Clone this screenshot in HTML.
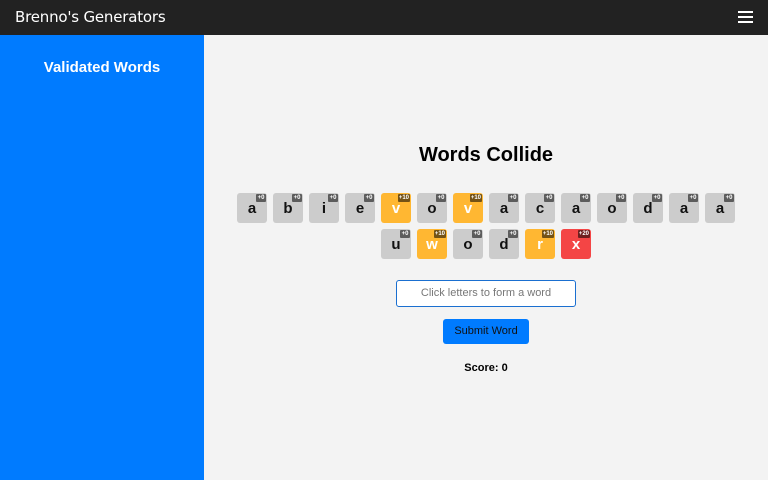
<!DOCTYPE html>
<html><head><meta charset="utf-8"><style>
*{margin:0;padding:0;box-sizing:border-box}
body{width:768px;height:480px;overflow:hidden;background:#f3f3f3;font-family:"Liberation Sans",Arial,Helvetica,sans-serif;position:relative}
.hdr{position:absolute;left:0;top:0;width:768px;height:35px;background:#222}
.hdr .t{position:absolute;left:15px;top:8px;color:#fff;font-family:"DejaVu Sans",sans-serif;font-size:15px;letter-spacing:-0.2px}
.hb{position:absolute;left:738px;width:15px;height:2px;background:#fff}
.side{position:absolute;left:0;top:35px;width:204px;height:445px;background:#007bff}
.side div{position:absolute;top:24px;width:204px;text-align:center;color:#fff;font-weight:bold;font-size:15px;font-family:"Liberation Sans",Arial,sans-serif}
h1{position:absolute;left:204px;width:564px;top:144px;text-align:center;font-size:20px;font-weight:bold;color:#000;font-family:"Liberation Sans",Arial,sans-serif}
.tile{position:absolute;width:30px;height:30px;border-radius:3px;background:#ccc;color:#111;font-weight:bold;font-size:15px;text-align:center;line-height:32px;font-family:"Liberation Sans",Arial,sans-serif}
.tile.y{background:#ffb732;color:#fff}
.tile.r{background:#f44545;color:#fff}
.tile b{position:absolute;top:1px;right:1px;height:8px;padding:0 1px;min-width:10px;background:rgba(0,0,0,.55);color:#fff;font-size:6px;line-height:8px;border-radius:1px;font-weight:bold}
.inp{position:absolute;left:396px;top:280px;width:180px;height:27px;border:1px solid #1a6fd0;border-radius:3px;background:#fff;color:#777;font-size:11px;text-align:center;line-height:25px;font-family:"Liberation Sans",Arial,sans-serif}
.btn{position:absolute;left:443px;top:319px;width:86px;height:25px;background:#007bff;border-radius:3px;color:#111;font-size:11px;text-align:center;line-height:25px;font-family:"Liberation Sans",Arial,sans-serif}
.sc{position:absolute;left:204px;width:564px;top:362px;text-align:center;font-size:11px;font-weight:bold;font-family:"Liberation Sans",Arial,sans-serif}
</style></head><body>
<div class="hdr"><div class="t">Brenno's Generators</div>
<div class="hb" style="top:11px"></div><div class="hb" style="top:16px"></div><div class="hb" style="top:21px"></div></div>
<div class="side"><div>Validated Words</div></div>
<h1>Words Collide</h1>
<div class="tile" style="left:237px;top:193px">a<b>+0</b></div>
<div class="tile" style="left:273px;top:193px">b<b>+0</b></div>
<div class="tile" style="left:309px;top:193px">i<b>+0</b></div>
<div class="tile" style="left:345px;top:193px">e<b>+0</b></div>
<div class="tile y" style="left:381px;top:193px">v<b>+10</b></div>
<div class="tile" style="left:417px;top:193px">o<b>+0</b></div>
<div class="tile y" style="left:453px;top:193px">v<b>+10</b></div>
<div class="tile" style="left:489px;top:193px">a<b>+0</b></div>
<div class="tile" style="left:525px;top:193px">c<b>+0</b></div>
<div class="tile" style="left:561px;top:193px">a<b>+0</b></div>
<div class="tile" style="left:597px;top:193px">o<b>+0</b></div>
<div class="tile" style="left:633px;top:193px">d<b>+0</b></div>
<div class="tile" style="left:669px;top:193px">a<b>+0</b></div>
<div class="tile" style="left:705px;top:193px">a<b>+0</b></div>
<div class="tile" style="left:381px;top:229px">u<b>+0</b></div>
<div class="tile y" style="left:417px;top:229px">w<b>+10</b></div>
<div class="tile" style="left:453px;top:229px">o<b>+0</b></div>
<div class="tile" style="left:489px;top:229px">d<b>+0</b></div>
<div class="tile y" style="left:525px;top:229px">r<b>+10</b></div>
<div class="tile r" style="left:561px;top:229px">x<b>+20</b></div>
<div class="inp">Click letters to form a word</div>
<div class="btn">Submit Word</div>
<div class="sc">Score: 0</div>
</body></html>
